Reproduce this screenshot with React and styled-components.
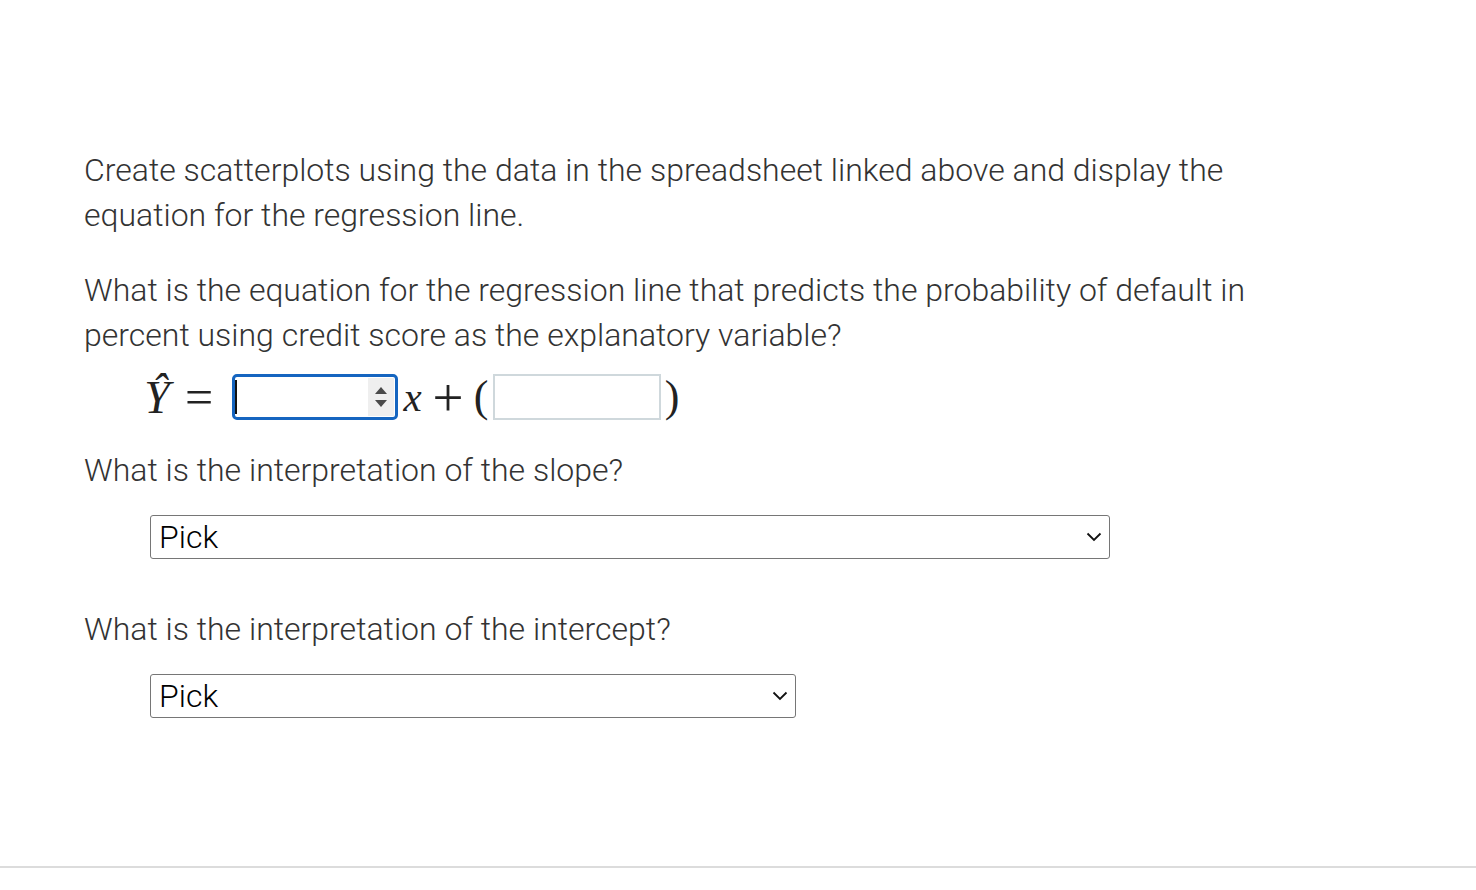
import React from 'react';
import styled, { createGlobalStyle } from 'styled-components';

const GlobalStyle = createGlobalStyle`
    html, body {
        margin: 0;
        padding: 0;
        background: #ffffff;
    }
    body {
        font-family: Roboto, "Liberation Sans", sans-serif;
        color: #333333;
    }
`;

const Page = styled.div`
    height: 868px;
    border-bottom: 2px solid #dcdcdc;
    box-sizing: border-box;
`;

const Question = styled.div`
    width: 1200px;
    padding: 148px 0 0 84px;
`;

const Text = styled.p`
    font-size: 32px;
    font-weight: 300;
    line-height: 45px;
    margin: 0;
    margin-top: ${(p) => p.$top || 0}px;
`;

const EquationRow = styled.div`
    display: flex;
    align-items: center;
    margin-top: 16px;
    padding-left: 50px;
    height: 46px;
    font-family: "Liberation Serif", "DejaVu Serif", serif;
    color: #222222;
`;

const MathCell = styled.span`
    display: inline-flex;
    justify-content: center;
    align-items: center;
    width: ${(p) => p.$w}px;
    height: 46px;
    font-size: ${(p) => p.$size || 41}px;
    font-style: ${(p) => (p.$italic ? 'italic' : 'normal')};
    line-height: 1;
    padding-top: ${(p) => p.$drop || 0}px;
    box-sizing: border-box;
`;

const NumberBox = styled.div`
    display: flex;
    align-items: stretch;
    width: 166px;
    height: 46px;
    box-sizing: border-box;
    border: 3px solid #1565c0;
    border-radius: 5px;
    background: #ffffff;
    overflow: hidden;
    margin-left: 14px;
`;

const BareInput = styled.input`
    flex: 1;
    min-width: 0;
    border: none;
    outline: none;
    padding: 0 4px;
    font-size: 26px;
    font-family: Roboto, sans-serif;
    border-left: 2px solid #111111;
    margin: 3px 0;
`;

const Spinner = styled.div`
    width: 26px;
    background: #efefef;
    display: flex;
    flex-direction: column;
    align-items: center;
    justify-content: center;
    gap: 6px;
    margin: 1px 1px 1px 0;
`;

const PlainBox = styled.input`
    width: 168px;
    height: 46px;
    box-sizing: border-box;
    border: 2px solid #cfd8dc;
    border-radius: 0;
    outline: none;
    font-size: 26px;
    font-family: Roboto, sans-serif;
    padding: 0 6px;
    margin: 0;
`;

const SelectWrap = styled.div`
    display: grid;
    width: ${(p) => p.$width}px;
    margin-top: 22px;
    margin-left: 66px;
    & > * {
        grid-area: 1 / 1;
    }
`;

const Select = styled.select`
    appearance: none;
    -webkit-appearance: none;
    height: 44px;
    box-sizing: border-box;
    border: 1px solid #767676;
    border-radius: 3px;
    background: #ffffff;
    color: #000000;
    font-family: Roboto, sans-serif;
    font-size: 32px;
    font-weight: 300;
    padding: 0 40px 0 8px;
    outline: none;
`;

const Chevron = styled.svg`
    justify-self: end;
    align-self: center;
    margin-right: 8px;
    pointer-events: none;
`;

const Dropdown = ({ width }) => (
    <SelectWrap $width={width}>
        <Select defaultValue="">
            <option value="">Pick</option>
        </Select>
        <Chevron width="16" height="10" viewBox="0 0 16 10">
            <path d="M1.5 1.5 L8 8 L14.5 1.5" fill="none" stroke="#111" strokeWidth="1.8" />
        </Chevron>
    </SelectWrap>
);

const App = () => {
    return (
        <>
            <GlobalStyle />
            <Page>
                <Question>
                    <Text>
                        Create scatterplots using the data in the spreadsheet linked above and display the
                        equation for the regression line.
                    </Text>
                    <Text $top={30}>
                        What is the equation for the regression line that predicts the probability of default in
                        percent using credit score as the explanatory variable?
                    </Text>
                    <EquationRow>
                        <MathCell $w={46} $size={46} $italic $drop={2}>Ŷ</MathCell>
                        <MathCell $w={38} $size={50}>=</MathCell>
                        <NumberBox>
                            <BareInput type="text" />
                            <Spinner>
                                <svg width="12" height="7" viewBox="0 0 12 7">
                                    <path d="M6 0 L12 7 L0 7 Z" fill="#4a4a4a" />
                                </svg>
                                <svg width="12" height="7" viewBox="0 0 12 7">
                                    <path d="M0 0 L12 0 L6 7 Z" fill="#4a4a4a" />
                                </svg>
                            </Spinner>
                        </NumberBox>
                        <MathCell $w={29} $italic>x</MathCell>
                        <MathCell $w={42} $size={55}>+</MathCell>
                        <MathCell $w={24} $size={44}>(</MathCell>
                        <PlainBox type="text" />
                        <MathCell $w={22} $size={44}>)</MathCell>
                    </EquationRow>
                    <Text $top={27.5}>What is the interpretation of the slope?</Text>
                    <Dropdown width={960} />
                    <Text $top={48.5}>What is the interpretation of the intercept?</Text>
                    <Dropdown width={646} />
                </Question>
            </Page>
        </>
    );
};

export default App;
